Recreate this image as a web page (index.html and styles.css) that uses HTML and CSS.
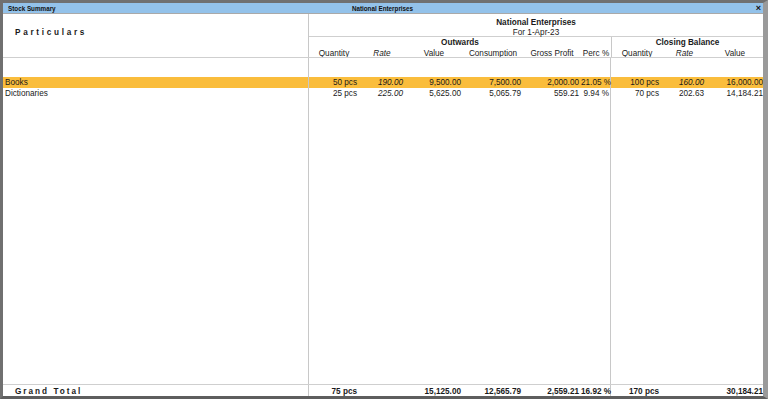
FILE: index.html
```html
<!DOCTYPE html>
<html>
<head>
<meta charset="utf-8">
<link rel="stylesheet" href="styles.css">
</head>
<body>
<div class="window">
  <div class="titlebar">
    <span class="tb-left">Stock Summary</span>
    <span class="tb-center">National Enterprises</span>
    <span class="tb-close">×</span>
  </div>
  <div class="header">
    <div class="h-part"><span class="spaced">Particulars</span></div>
    <div class="h-right">
      <div class="h-company">
        <div class="company">National Enterprises</div>
        <div class="period">For 1-Apr-23</div>
      </div>
      <div class="h-groups">
        <div class="group outwards">
          <div class="g-title">Outwards</div>
          <div class="g-cols">
            <span class="c-q">Quantity</span>
            <span class="c-r it">Rate</span>
            <span class="c-v">Value</span>
            <span class="c-c">Consumption</span>
            <span class="c-g">Gross Profit</span>
            <span class="c-p">Perc %</span>
          </div>
        </div>
        <div class="group closing">
          <div class="g-title">Closing Balance</div>
          <div class="g-cols cl">
            <span class="c-q">Quantity</span>
            <span class="c-r it">Rate</span>
            <span class="c-v2">Value</span>
          </div>
        </div>
      </div>
    </div>
  </div>
  <div class="body">
    <div class="row spacer">
      <span class="cell name"></span><span class="cell"></span><span class="cell"></span><span class="cell"></span><span class="cell"></span><span class="cell"></span><span class="cell sep"></span><span class="cell"></span><span class="cell"></span><span class="cell"></span>
    </div>
    <div class="row hl">
      <span class="cell name">Books</span>
      <span class="cell">50 pcs</span>
      <span class="cell it">190.00</span>
      <span class="cell">9,500.00</span>
      <span class="cell">7,500.00</span>
      <span class="cell">2,000.00</span>
      <span class="cell sep">21.05 %</span>
      <span class="cell">100 pcs</span>
      <span class="cell it">160.00</span>
      <span class="cell last">16,000.00</span>
    </div>
    <div class="row">
      <span class="cell name">Dictionaries</span>
      <span class="cell">25 pcs</span>
      <span class="cell it">225.00</span>
      <span class="cell">5,625.00</span>
      <span class="cell">5,065.79</span>
      <span class="cell">559.21</span>
      <span class="cell sep">9.94 %</span>
      <span class="cell">70 pcs</span>
      <span class="cell">202.63</span>
      <span class="cell last">14,184.21</span>
    </div>
    <div class="row filler">
      <span class="cell name"></span><span class="cell"></span><span class="cell"></span><span class="cell"></span><span class="cell"></span><span class="cell"></span><span class="cell sep"></span><span class="cell"></span><span class="cell"></span><span class="cell"></span>
    </div>
  </div>
  <div class="row total">
    <span class="cell name"><span class="spaced2">Grand Total</span></span>
    <span class="cell">75 pcs</span>
    <span class="cell"></span>
    <span class="cell">15,125.00</span>
    <span class="cell">12,565.79</span>
    <span class="cell">2,559.21</span>
    <span class="cell sep">16.92 %</span>
    <span class="cell">170 pcs</span>
    <span class="cell"></span>
    <span class="cell last">30,184.21</span>
  </div>
</div>
</body>
</html>
```
FILE: styles.css
```css
html, body {
  margin: 0;
  padding: 0;
  background: #6f6f6f;
}
.window {
  width: 768px;
  height: 399px;
  box-sizing: border-box;
  border-left: 3px solid #707070;
  border-top: 3px solid #707070;
  border-right: 5px solid #9a9a9a;
  border-bottom: 3px solid #5e5e5e;
  background: #ffffff;
  display: flex;
  flex-direction: column;
  font-family: "Liberation Sans", Arial, sans-serif;
  font-size: 8.2px;
  color: #1a1a1a;
  overflow: hidden;
}
.titlebar {
  height: 10px;
  background: #93c2ea;
  border-bottom: 1px solid #a9a9a9;
  display: flex;
  align-items: center;
  position: relative;
  font-size: 6.3px;
  font-weight: bold;
  color: #111;
  flex-shrink: 0;
}
.tb-left { padding-left: 5px; }
.tb-center {
  position: absolute;
  left: 0;
  right: 0;
  text-align: center;
  margin-left: -1px;
}
.tb-close {
  margin-left: auto;
  padding-right: 2px;
  font-size: 9px;
  line-height: 10px;
}
.header {
  display: flex;
  height: 43px;
  border-bottom: 1px solid #cfcfcf;
  flex-shrink: 0;
  overflow: hidden;
}
.h-part {
  width: 306px;
  border-right: 1px solid #c8c8c8;
  padding-left: 12px;
  padding-top: 14px;
  box-sizing: border-box;
  font-weight: bold;
}
.spaced { letter-spacing: 2.7px; }
.spaced2 { letter-spacing: 2px; }
.h-right {
  flex: 1;
  display: flex;
  flex-direction: column;
}
.h-company {
  height: 23px;
  flex-shrink: 0;
  border-bottom: 1px solid #cfcfcf;
  text-align: center;
  line-height: 10px;
  padding-top: 4px;
  box-sizing: border-box;
}
.company { font-weight: bold; }
.h-groups {
  display: flex;
  flex: 1;
}
.group {
  display: flex;
  flex-direction: column;
}
.outwards {
  width: 302px;
  border-right: 1px solid #c8c8c8;
}
.closing { flex: 1; }
.g-title {
  text-align: center;
  font-weight: bold;
  line-height: 10px;
  margin-top: 1px;
}
.g-cols {
  display: grid;
  grid-template-columns: 50px 46px 58px 60px 58px 30px;
  text-align: center;
  line-height: 10px;
  padding-top: 1px;
}
.g-cols.cl {
  grid-template-columns: 50px 45px 1fr;
}
.it { font-style: italic; }
.body {
  flex: 1;
  display: flex;
  flex-direction: column;
}
.row {
  display: grid;
  grid-template-columns: 306px 50px 46px 58px 60px 58px 30px 50px 45px 1fr;
  height: 11px;
  line-height: 11px;
  flex-shrink: 0;
}
.row.spacer { height: 19px; }
.row.filler { flex: 1; }
.row.hl { background: #fabd3c; }
.cell {
  text-align: right;
  padding-right: 2px;
  white-space: nowrap;
}
.cell.name {
  text-align: left;
  padding-left: 2px;
  padding-right: 0;
  border-right: 1px solid #c8c8c8;
}
.cell.sep {
  border-right: 1px solid #c8c8c8;
  padding-right: 1px;
}
.cell.last { padding-right: 0; }
.row.total {
  height: 11px;
  line-height: 13px;
  overflow: hidden;
  border-top: 1px solid #cfcfcf;
  font-weight: bold;
}
.row.total .cell.name { padding-left: 12px; }
```
